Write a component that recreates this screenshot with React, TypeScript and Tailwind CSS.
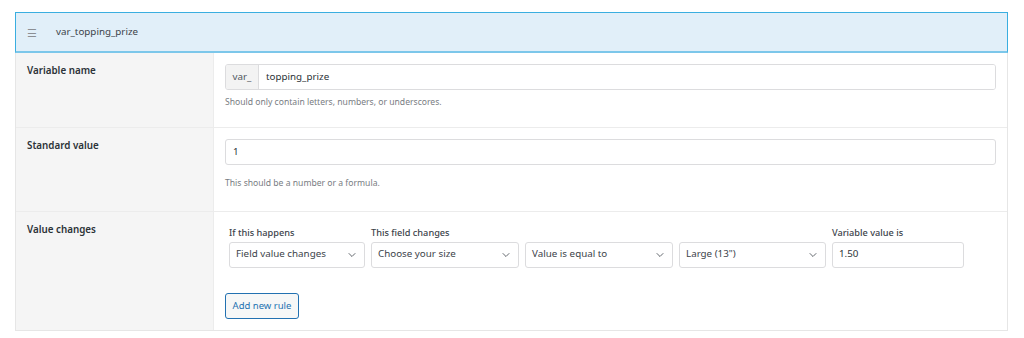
import { ChevronDown } from "lucide-react";

function Select({ value, width }: { value: string; width: string }) {
  return (
    <div
      className={`${width} h-[26px] flex items-center justify-between rounded-[3px] border border-[#dcdcde] bg-white pl-[6px] pr-[6px] text-[9.8px] text-[#3c434a]`}
    >
      <span>{value}</span>
      <ChevronDown className="w-[12px] h-[12px] text-[#3c434a]" strokeWidth={1.6} />
    </div>
  );
}

function Row({
  label,
  children,
  height,
  last,
}: {
  label: string;
  children: React.ReactNode;
  height: string;
  last?: boolean;
}) {
  return (
    <div className={`flex ${height} ${last ? "" : "border-b border-[#ececec]"}`}>
      <div className="w-[198px] shrink-0 bg-[#f5f5f5] border-r border-[#ececec] pl-[11px] pt-[11px] text-[9.8px] font-semibold text-[#2c3338]">
        {label}
      </div>
      <div className="flex-1 bg-white pl-[11px] pr-[11px] pt-[11px]">{children}</div>
    </div>
  );
}

export default function App() {
  return (
    <div className="w-[1024px] h-[338px] bg-white pt-[12px] pl-[15px] font-['Segoe_UI','Noto_Sans',sans-serif]">
      <div className="w-[993px]">
        <div className="h-[41px] border border-[#3aaee0] border-b-2 border-b-[#7cc7ea] bg-[#e1eff9] flex items-center pl-[11px] text-[9.8px] text-[#3c434a]">
          <span className="text-[#8c8f94] text-[11px] leading-none">☰</span>
          <span className="ml-[19px]">var_topping_prize</span>
        </div>
        <div className="border border-t-0 border-[#e6e6e6]">
          <Row label="Variable name" height="h-[75px]">
            <div className="flex h-[26px] rounded-[3px] border border-[#dcdcde] overflow-hidden text-[9.8px]">
              <div className="w-[33px] shrink-0 bg-[#f3f3f3] border-r border-[#dcdcde] flex items-center justify-center text-[#50575e]">
                var_
              </div>
              <div className="flex-1 bg-white flex items-center pl-[7px] text-[#2c3338]">topping_prize</div>
            </div>
            <p className="mt-[6px] text-[8.6px] text-[#787c82]">Should only contain letters, numbers, or underscores.</p>
          </Row>
          <Row label="Standard value" height="h-[84px]">
            <div className="h-[26px] rounded-[3px] border border-[#dcdcde] bg-white flex items-center pl-[7px] text-[9.8px] text-[#2c3338]">
              1
            </div>
            <p className="mt-[12px] text-[8.6px] text-[#787c82]">This should be a number or a formula.</p>
          </Row>
          <Row label="Value changes" height="h-[118px]" last>
            <div className="pt-[3px] pl-[4px]">
              <div className="flex gap-[6px] items-end">
                <div className="flex flex-col">
                  <span className="text-[9.2px] font-medium text-[#3c434a] mb-[2px]">If this happens</span>
                  <Select value="Field value changes" width="w-[136px]" />
                </div>
                <div className="flex flex-col">
                  <span className="text-[9.2px] font-medium text-[#3c434a] mb-[2px]">This field changes</span>
                  <Select value="Choose your size" width="w-[148px]" />
                </div>
                <Select value="Value is equal to" width="w-[148px]" />
                <Select value={'Large (13")'} width="w-[147px]" />
                <div className="flex flex-col">
                  <span className="text-[9.2px] font-medium text-[#3c434a] mb-[2px]">Variable value is</span>
                  <div className="w-[132px] h-[26px] rounded-[3px] border border-[#dcdcde] bg-white flex items-center pl-[6px] text-[9.8px] text-[#2c3338]">
                    1.50
                  </div>
                </div>
              </div>
            </div>
            <button className="mt-[25px] h-[26px] w-[74px] rounded-[3px] border border-[#2271b1] bg-[#f6f7f7] text-[9.5px] text-[#2271b1]">
              Add new rule
            </button>
          </Row>
        </div>
      </div>
    </div>
  );
}
